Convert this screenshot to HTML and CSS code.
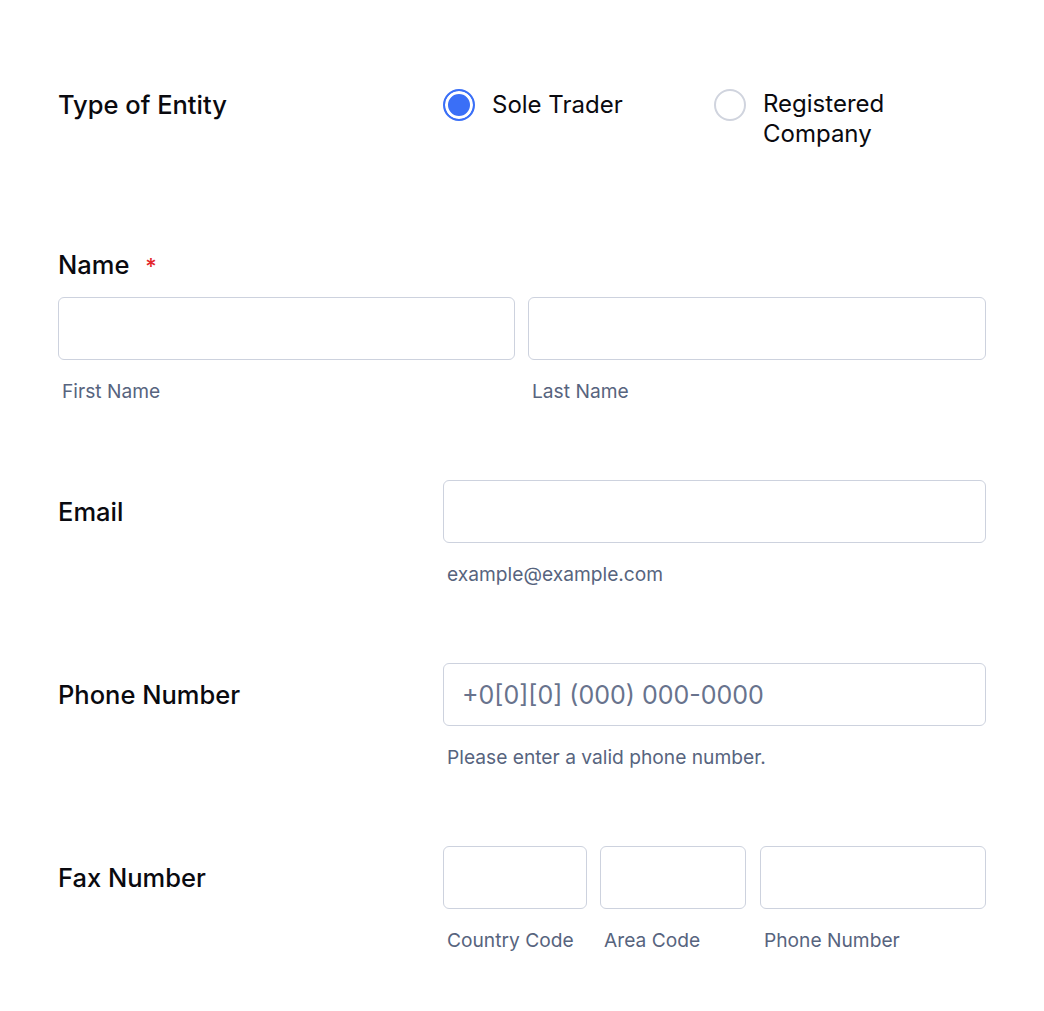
FILE: index.html
```html
<!DOCTYPE html>
<html lang="en">
<head>
<meta charset="utf-8">
<title>Form</title>
<link rel="stylesheet" href="styles.css">
</head>
<body>
<form class="form">
  <div class="row row-type">
    <div class="label">Type of Entity</div>
    <div class="radios">
      <label class="radio">
        <span class="dot checked"></span>
        <span class="radio-text">Sole Trader</span>
      </label>
      <label class="radio">
        <span class="dot"></span>
        <span class="radio-text narrow">Registered Company</span>
      </label>
    </div>
  </div>

  <div class="block-name">
    <div class="label">Name <span class="req">*</span></div>
    <div class="name-fields">
      <div class="field">
        <div class="input"></div>
        <div class="sub">First Name</div>
      </div>
      <div class="field">
        <div class="input"></div>
        <div class="sub">Last Name</div>
      </div>
    </div>
  </div>

  <div class="row row-field">
    <div class="label label-mid">Email</div>
    <div class="field">
      <div class="input"></div>
      <div class="sub">example@example.com</div>
    </div>
  </div>

  <div class="row row-field">
    <div class="label label-mid">Phone Number</div>
    <div class="field">
      <div class="input"><span class="placeholder">+0[0][0] (000) 000-0000</span></div>
      <div class="sub">Please enter a valid phone number.</div>
    </div>
  </div>

  <div class="row row-field">
    <div class="label label-mid">Fax Number</div>
    <div class="fax-fields">
      <div class="field">
        <div class="input"></div>
        <div class="sub">Country Code</div>
      </div>
      <div class="field">
        <div class="input"></div>
        <div class="sub">Area Code</div>
      </div>
      <div class="field">
        <div class="input"></div>
        <div class="sub">Phone Number</div>
      </div>
    </div>
  </div>
</form>
</body>
</html>
```

FILE: styles.css
```css
html, body {
  margin: 0;
  padding: 0;
  background: #ffffff;
}

body {
  font-family: Inter, "Noto Sans", "Liberation Sans", sans-serif;
  color: #0b0b0f;
}

.form {
  width: 928px;
  padding: 89px 0 40px 58px;
}

.row {
  display: grid;
  grid-template-columns: 385px 543px;
}

.label {
  font-size: 25.5px;
  line-height: 30px;
  font-weight: 500;
  color: #0a0a0f;
}

.label-mid {
  padding-top: 17px;
}

.row-type .label {
  padding-top: 1px;
}

.radios {
  display: grid;
  grid-template-columns: 271px 272px;
}

.radio {
  display: flex;
  align-items: flex-start;
  gap: 17px;
}

.dot {
  flex: none;
  width: 32px;
  height: 32px;
  border-radius: 50%;
  border: 2px solid #d0d4de;
  box-sizing: border-box;
  background: #fff;
}

.dot.checked {
  border: 2px solid #3a6ff7;
  background: #3a6ff7;
  box-shadow: inset 0 0 0 3px #ffffff;
}

.radio-text {
  font-size: 24px;
  line-height: 30px;
  padding-top: 1px;
  color: #0a0a0f;
}

.narrow {
  max-width: 160px;
  padding-top: 0;
}

.block-name {
  margin-top: 101px;
}

.req {
  color: #e3262a;
  margin-left: 9px;
  font-size: 22px;
}

.name-fields {
  display: grid;
  grid-template-columns: 457px 458px;
  gap: 13px;
  margin-top: 16px;
}

.input {
  height: 63px;
  box-sizing: border-box;
  border: 1.5px solid #cdd2de;
  border-radius: 6px;
  background: #fff;
  display: flex;
  align-items: center;
  padding: 0 18px;
}

.placeholder {
  font-size: 25px;
  color: #68738d;
}

.sub {
  font-size: 19.2px;
  line-height: 22px;
  color: #57647e;
  margin-top: 20px;
  padding-left: 4px;
}

.row-field {
  margin-top: 78px;
}

.fax-fields {
  display: grid;
  grid-template-columns: 144px 146px 1fr;
  column-gap: 13px;
}

.fax-fields .field:nth-child(3) {
  margin-left: 1px;
}
```
